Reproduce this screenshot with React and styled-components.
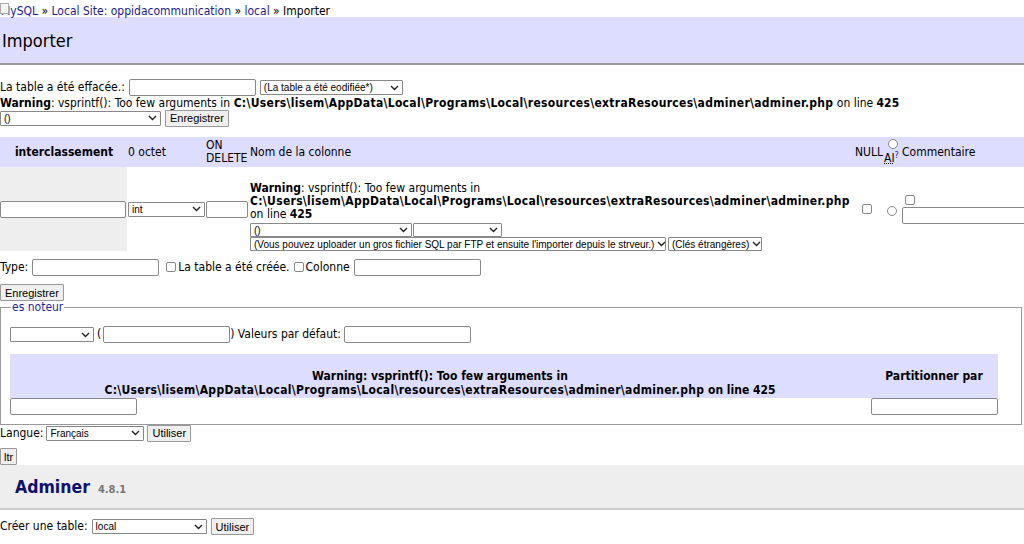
import React from 'react';
import styled, { createGlobalStyle } from 'styled-components';

const GlobalStyle = createGlobalStyle`
  html, body {
    margin: 0;
    padding: 0;
    background: #fff;
    overflow: hidden;
  }
  body {
    font: 12px/1.2 "DejaVu Sans Condensed", "DejaVu Sans", Verdana, sans-serif;
    color: #000;
  }
`;

const Page = styled.div`
  width: 1024px;
  height: 544px;
  overflow: hidden;
`;

const Breadcrumb = styled.p`
  position: relative;
  margin: 0;
  height: 17px;
  line-height: 23px;
  padding-left: 1px;
  white-space: nowrap;
`;

const BrokenImage = styled.span`
  position: absolute;
  left: 0;
  top: 3px;
  width: 7px;
  height: 9px;
  border: 1px solid #aaa;
  background: #f4f4f4;
`;

const Crumb = styled.a`
  color: #1b1b8f;
  text-decoration: none;
`;

const PageTitle = styled.h2`
  margin: 0;
  height: 46px;
  line-height: 48px;
  padding-left: 2px;
  font-size: 18px;
  font-weight: normal;
  background: #ddf;
  border-bottom: 2px solid #999;
`;

const Line = styled.div`
  display: flex;
  align-items: center;
  gap: ${(p) => p.$gap ?? 4}px;
  height: ${(p) => p.$h ?? 16}px;
  margin-top: ${(p) => p.$mt ?? 0}px;
  white-space: nowrap;
`;

const Warning = styled.div`
  height: 14px;
  line-height: 14px;
  white-space: nowrap;
`;

const Path = styled.span`
  letter-spacing: 0.3px;
`;

const TextInput = styled.input`
  box-sizing: border-box;
  width: ${(p) => p.$w ?? 127}px;
  height: ${(p) => p.$h ?? 17}px;
  border: 1px solid #888;
  border-radius: 2px;
  margin: 0;
  padding: 0 2px;
  font: 10px "Liberation Sans", Arial, sans-serif;
  background: #fff;
  flex: none;
`;

const Select = styled.div`
  box-sizing: border-box;
  display: inline-flex;
  align-items: center;
  justify-content: space-between;
  width: ${(p) => p.$w}px;
  height: ${(p) => p.$h ?? 15}px;
  border: 1px solid #888;
  border-radius: 1px;
  padding: 0 3px;
  font: 10px "Liberation Sans", Arial, sans-serif;
  background: #fff;
  flex: none;
  overflow: hidden;
  white-space: nowrap;
  svg { flex: none; margin-left: 3px; }
`;

const Button = styled.button`
  box-sizing: border-box;
  height: 17px;
  margin: 0;
  padding: 0 ${(p) => p.$px ?? 4}px;
  border: 1px solid #999;
  border-radius: 1px;
  background: #efefef;
  font: 11px "Liberation Sans", Arial, sans-serif;
  color: #000;
  flex: none;
`;

const Check = styled.span`
  display: inline-block;
  box-sizing: border-box;
  width: 10px;
  height: 10px;
  border: 1px solid #888;
  border-radius: ${(p) => (p.$round ? '50%' : '2px')};
  background: #fff;
  vertical-align: middle;
  flex: none;
`;

const Chevron = () => (
  <svg width="9" height="6" viewBox="0 0 9 6">
    <path d="M1 1l3.5 3.5L8 1" fill="none" stroke="#222" strokeWidth="1.4" />
  </svg>
);

const Drop = ({ w, h, children }) => (
  <Select $w={w} $h={h}>
    <span>{children}</span>
    <Chevron />
  </Select>
);

const ColumnTable = styled.table`
  margin-top: 11px;
  width: 1040px;
  border-collapse: collapse;
  table-layout: fixed;
  th, td {
    padding: 0 0 0 1px;
    text-align: left;
    vertical-align: middle;
    font-weight: normal;
  }
`;

const HeadRow = styled.tr`
  background: #ddf;
  height: 29px;
  line-height: 13px;
`;

const HeadCell = styled.th`
  &&& {
    font-weight: ${(p) => (p.$bold ? 'bold' : 'normal')};
    text-align: ${(p) => (p.$center ? 'center' : 'left')};
    white-space: nowrap;
  }
`;

const BodyRow = styled.tr`
  height: 84px;
`;

const GrayCell = styled.td`
  &&& {
    background: #eee;
    padding: 0;
  }
`;

const StackCell = styled.td`
  line-height: 13px;
  white-space: nowrap;
`;

const SelectRow = styled.div`
  display: flex;
  gap: ${(p) => p.$gap ?? 2}px;
  margin-top: ${(p) => p.$mt ?? 0}px;
`;

const AiLabel = styled.span`
  display: inline-block;
  position: relative;
  top: -2px;
  margin-left: -3px;
  text-decoration: underline dotted;
`;

const Help = styled.sup`
  color: #22a;
  font-size: 9px;
  position: relative;
  top: -1px;
`;

const LabelText = styled.span`
  display: inline-flex;
  align-items: center;
  gap: 2px;
`;

const Fieldset = styled.fieldset`
  margin: 0 2px 0 0;
  padding: 0 0 9px 9px;
  border: 1px solid #999;
`;

const Legend = styled.legend`
  padding: 0 1px;
  margin-left: 1px;
  color: #1f1f9a;
  line-height: 12px;
`;

const PartitionTable = styled.table`
  margin-top: 11px;
  width: 988px;
  border-collapse: collapse;
  table-layout: fixed;
  th, td { padding: 0; }
`;

const PartHead = styled.tr`
  background: #ddf;
  height: 44px;
  th {
    font-weight: bold;
    text-align: center;
    line-height: 14px;
    vertical-align: middle;
  }
  th:first-child {
    vertical-align: bottom;
    padding-bottom: 1px;
  }
`;

const PartRow = styled.tr`
  height: 17px;
  td:last-child { padding-left: 1px; }
`;

const Footer = styled.div`
  height: 43px;
  background: #eee;
  border-bottom: 2px solid #ccc;
  display: flex;
  align-items: baseline;
  gap: 8px;
  padding-left: 15px;
  line-height: 45px;
`;

const Brand = styled.a`
  color: #0f0f6e;
  font-size: 17.5px;
  font-weight: bold;
  text-decoration: none;
`;

const Version = styled.span`
  color: #777;
  font-size: 11px;
  font-weight: bold;
`;

const warnPath =
  'C:\\Users\\lisem\\AppData\\Local\\Programs\\Local\\resources\\extraResources\\adminer\\adminer.php';

export default function App() {
  return (
    <Page>
      <GlobalStyle />
      <Breadcrumb>
        <BrokenImage />
        <Crumb>MySQL</Crumb> » <Crumb>Local Site: oppidacommunication</Crumb> » <Crumb>local</Crumb> » Importer
      </Breadcrumb>
      <PageTitle>Importer</PageTitle>

      <Line $mt={14} $h={17}>
        <span>La table a été effacée.:</span>
        <TextInput $w={127} />
        <Drop w={143}>(La table a été eodifiée*)</Drop>
      </Line>
      <Warning>
        <b>Warning</b>: vsprintf(): Too few arguments in <b><Path>{warnPath}</Path></b> on line <b>425</b>
      </Warning>
      <Line $h={16}>
        <Drop w={161}>()</Drop>
        <Button>Enregistrer</Button>
      </Line>

      <ColumnTable>
        <colgroup>
          <col style={{ width: 127 }} />
          <col style={{ width: 78 }} />
          <col style={{ width: 44 }} />
          <col style={{ width: 602 }} />
          <col style={{ width: 35 }} />
          <col style={{ width: 15 }} />
          <col />
        </colgroup>
        <thead>
          <HeadRow>
            <HeadCell $bold $center>interclassement</HeadCell>
            <HeadCell>0 octet</HeadCell>
            <HeadCell>
              ON
              <br />
              DELETE
            </HeadCell>
            <HeadCell>Nom de la colonne</HeadCell>
            <HeadCell style={{ paddingLeft: 4 }}>NULL</HeadCell>
            <HeadCell>
              <Check $round style={{ marginLeft: 1 }} />
              <br />
              <AiLabel>AI</AiLabel>
              <Help>?</Help>
            </HeadCell>
            <HeadCell>Commentaire</HeadCell>
          </HeadRow>
        </thead>
        <tbody>
          <BodyRow>
            <GrayCell>
              <TextInput $w={126} />
            </GrayCell>
            <td>
              <Drop w={77}>int</Drop>
            </td>
            <td>
              <TextInput $w={42} />
            </td>
            <StackCell>
              <div style={{ marginTop: 15 }}>
                <b>Warning</b>: vsprintf(): Too few arguments in
              </div>
              <div>
                <b><Path>{warnPath}</Path></b>
              </div>
              <div>
                on line <b>425</b>
              </div>
              <SelectRow $mt={2} $gap={1}>
                <Drop w={162} h={14}>()</Drop>
                <Drop w={89} h={14}></Drop>
              </SelectRow>
              <SelectRow>
                <Drop w={416} h={14}>
                  (Vous pouvez uploader un gros fichier SQL par FTP et ensuite l'importer depuis le strveur.)
                </Drop>
                <Drop w={94} h={14}>(Clés étrangères)</Drop>
              </SelectRow>
            </StackCell>
            <td>
              <Check style={{ marginLeft: 10 }} />
            </td>
            <td>
              <Check $round style={{ marginLeft: 0, marginTop: 4 }} />
            </td>
            <td>
              <Check style={{ marginLeft: 3, display: 'block' }} />
              <TextInput $w={140} style={{ marginTop: 2 }} />
            </td>
          </BodyRow>
        </tbody>
      </ColumnTable>

      <Line $mt={8} $h={17} $gap={4}>
        <span>Type:</span>
        <TextInput $w={127} />
        <LabelText style={{ marginLeft: 3 }}>
          <Check />
          La table a été créée.
        </LabelText>
        <LabelText>
          <Check />
          Colonne
        </LabelText>
        <TextInput $w={127} />
      </Line>
      <Line $mt={8} $h={17}>
        <Button>Enregistrer</Button>
      </Line>

      <Fieldset>
        <Legend>es noteur</Legend>
        <Line $mt={13} $h={17} $gap={3}>
          <Drop w={84}></Drop>
          <span>(</span>
          <TextInput $w={127} style={{ marginLeft: -1 }} />
          <span style={{ marginLeft: -3 }}>) Valeurs par défaut:</span>
          <TextInput $w={127} />
        </Line>
        <PartitionTable>
          <colgroup>
            <col style={{ width: 860 }} />
            <col />
          </colgroup>
          <thead>
            <PartHead>
              <th>
                Warning: vsprintf(): Too few arguments in
                <br />
                <Path>{warnPath}</Path> on line 425
              </th>
              <th>Partitionner par</th>
            </PartHead>
          </thead>
          <tbody>
            <PartRow>
              <td>
                <TextInput $w={127} />
              </td>
              <td>
                <TextInput $w={127} />
              </td>
            </PartRow>
          </tbody>
        </PartitionTable>
      </Fieldset>

      <Line $h={16} $gap={3}>
        <span>Langue:</span>
        <Drop w={98}>Français</Drop>
        <Button>Utiliser</Button>
      </Line>
      <Line $mt={7} $h={17}>
        <Button $px={3}>ltr</Button>
      </Line>

      <Footer>
        <Brand>Adminer</Brand>
        <Version>4.8.1</Version>
      </Footer>

      <Line $mt={8} $h={17} $gap={4}>
        <span>Créer une table:</span>
        <Drop w={115}>local</Drop>
        <Button>Utiliser</Button>
      </Line>
    </Page>
  );
}
